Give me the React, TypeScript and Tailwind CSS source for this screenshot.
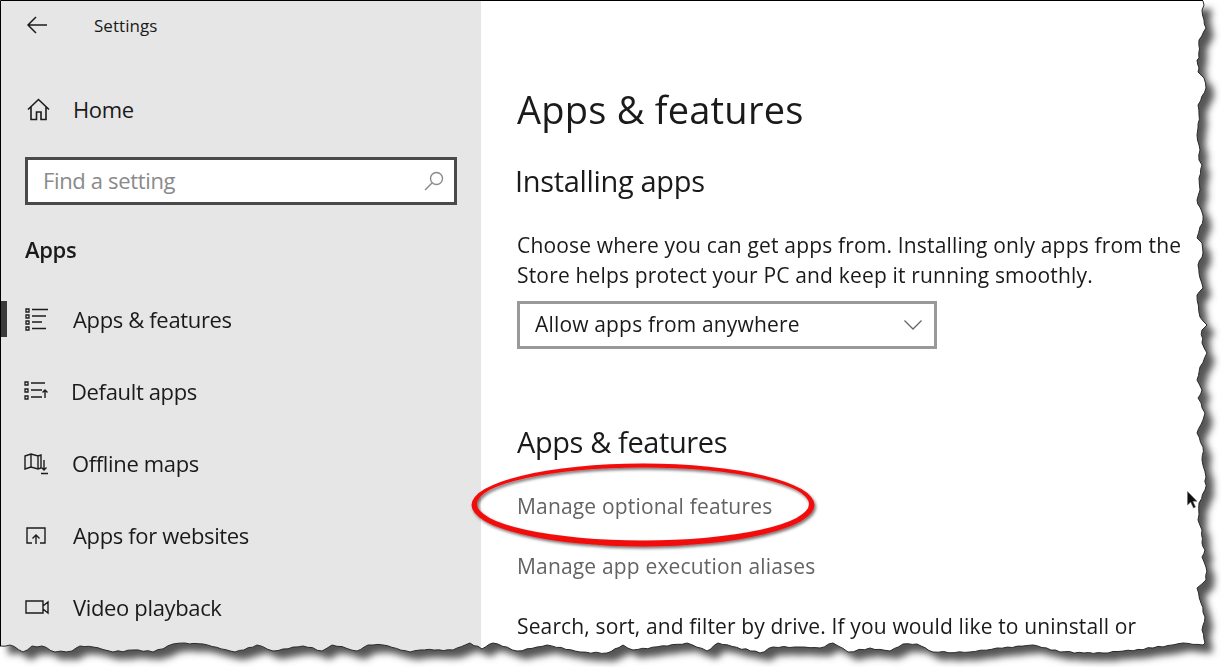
const font = "font-['Open_Sans','Noto_Sans',sans-serif]";

const right: [number, number][] = [
  [1203, 1], [1204, 5], [1202, 10], [1204, 20], [1206, 28], [1199, 40], [1199, 58], [1197, 60], [1199, 68], [1198, 72], [1204, 78], [1206, 88],
  [1198, 105], [1199, 115], [1198, 128], [1197, 135], [1200, 150], [1199, 160], [1202, 165], [1199, 178], [1200, 190], [1197, 200], [1202, 212], [1203, 220],
  [1200, 227], [1197, 238], [1202, 243], [1203, 253], [1198, 265], [1200, 278], [1203, 288], [1197, 295], [1200, 317], [1207, 325], [1202, 330],
  [1202, 343], [1207, 353], [1200, 367], [1197, 380], [1202, 390], [1198, 398], [1205, 413], [1203, 420], [1197, 433], [1203, 447], [1202, 460],
  [1206, 477], [1205, 490], [1199, 503], [1198, 520], [1202, 530], [1202, 543], [1205, 550], [1202, 557], [1206, 567], [1206, 580], [1197, 588],
  [1201, 603], [1205, 617], [1202, 630], [1205, 643], [1203, 645],
];
const bottom: [number, number][] = [
  [1183, 643], [1153, 648], [1103, 653], [1060, 652], [1033, 645], [997, 648], [970, 652], [933, 652], [917, 644], [903, 644], [890, 651], [870, 648], [848, 652], [833, 643], [820, 648],
  [800, 647], [773, 647], [760, 653], [718, 643], [707, 651], [687, 643], [633, 650], [623, 645], [607, 653], [580, 652], [547, 645], [517, 651], [493, 643], [482, 649], [470, 643], [453, 650], [420, 650],
  [410, 652], [383, 645], [368, 645], [357, 651], [332, 645], [322, 651], [303, 646], [273, 651], [257, 645], [235, 652], [203, 644], [185, 643], [173, 644], [153, 652], [133, 650], [113, 652], [93, 647], [80, 646], [72, 651], [55, 652], [42, 646], [32, 646], [23, 652], [10, 645], [0, 646],
];

function jag(pts: [number, number][]) {
  const out: string[] = [];
  pts.forEach((p, i) => {
    out.push(`${p[0]},${p[1]}`);
    const n = pts[i + 1];
    if (!n) return;
    const steps = Math.max(1, Math.round(Math.hypot(n[0] - p[0], n[1] - p[1]) / 5));
    for (let s = 1; s < steps; s++) {
      const t = s / steps;
      const j = ((Math.sin((i + 1) * 12.9898 + s * 78.233) * 43758.5453) % 1) * 0.9;
      const horizontal = Math.abs(n[0] - p[0]) > Math.abs(n[1] - p[1]);
      const x = p[0] + (n[0] - p[0]) * t + (horizontal ? 0 : j);
      const y = p[1] + (n[1] - p[1]) * t + (horizontal ? j : 0);
      out.push(`${x.toFixed(1)},${y.toFixed(1)}`);
    }
  });
  return out.join(" ");
}

const edge = jag([...right, ...bottom]);
const pagePoly = `M0,1 L${edge} Z`;
const outside = `M0,0 H1221 V667 H0 Z ${pagePoly}`;

function TornEdge() {
  return (
    <svg className="absolute left-0 top-0" width="1221" height="667" viewBox="0 0 1221 667">
      <defs>
        <filter id="tornBlur" x="-5%" y="-5%" width="110%" height="110%">
          <feGaussianBlur stdDeviation="3.500" />
        </filter>
        <clipPath id="outsideClip">
          <path d={outside} clipRule="evenodd" />
        </clipPath>
      </defs>
      <path d={outside} fill="#ffffff" fillRule="evenodd" />
      <g clipPath="url(#outsideClip)">
        <path d={pagePoly} fill="#555555" transform="translate(8 8)" filter="url(#tornBlur)" />
      </g>
      <polyline points={edge} fill="none" stroke="#2a2a2a" strokeWidth="1" />
      <path d="M0.5,646 V0.5 H1203" fill="none" stroke="#000000" strokeWidth="1" />
    </svg>
  );
}

function Icon({ children, w = 24, h = 24 }: { children: React.ReactNode; w?: number; h?: number }) {
  return (
    <svg width={w} height={h} viewBox={`0 0 ${w} ${h}`} fill="none" stroke="#1c1c1c" strokeWidth="1.4">
      {children}
    </svg>
  );
}

const items: { label: string; x: string; gap: string; active?: boolean; icon: React.ReactNode }[] = [
  {
    label: "Apps & features",
    x: "ml-[25px]",
    gap: "ml-[24px]",
    active: true,
    icon: (
      <Icon>
        <path d="M1,2h3v3h-3zM1,8h3v3h-3zM1,14h3v3h-3zM1,20h3v3h-3z" strokeWidth="1.3" />
        <path d="M7,2.500h16M7,9h14M7,15h10M7,21.500h14" />
      </Icon>
    ),
  },
  {
    label: "Default apps",
    x: "ml-[24px]",
    gap: "ml-[23px]",
    icon: (
      <Icon>
        <path d="M1,3h3v3h-3zM1,10h3v3h-3zM1,17h3v3h-3z" strokeWidth="1.3" />
        <path d="M7,4h14M7,11h11M7,18h11M21,19v-8M18.500,13.500l2.500,-2.500l2.500,2.500" />
      </Icon>
    ),
  },
  {
    label: "Offline maps",
    x: "ml-[24px]",
    gap: "ml-[24px]",
    icon: (
      <Icon>
        <path d="M1,5l6,-2l7,2l3,-1v13l-3,1l-7,-2l-6,2zM7,3v13M14,5v13" />
        <path d="M20,9v10M17.500,16.500l2.500,2.500l2.500,-2.500M17,22.500h7" />
      </Icon>
    ),
  },
  {
    label: "Apps for websites",
    x: "ml-[25px]",
    gap: "ml-[24px]",
    icon: (
      <Icon>
        <path d="M7,20h-5v-15h18v15h-5" />
        <path d="M11,21v-9M7.500,15.500l3.500,-3.500l3.500,3.500" />
      </Icon>
    ),
  },
  {
    label: "Video playback",
    x: "ml-[25px]",
    gap: "ml-[24px]",
    icon: (
      <Icon>
        <path d="M1,6h17v12h-17zM18,11l5,-4v11l-5,-4" />
      </Icon>
    ),
  },
];

function Sidebar() {
  return (
    <aside className="w-[481px] h-full shrink-0 bg-[#e6e6e6] flex flex-col text-[#1a1a1a]">
      <header className="h-[52px] flex items-center pl-[26px]">
        <svg width="22" height="20" viewBox="0 0 22 20" fill="none" stroke="#1c1c1c" strokeWidth="1.5" className="-mt-[3px]">
          <path d="M21,10H2M10,2L2,10l8,8" />
        </svg>
        <span className="ml-[46px] text-[17px] tracking-[0.05px]">Settings</span>
      </header>
      <div className="mt-[31px] h-[52px] flex items-center pl-[27px] text-[22px] tracking-[-0.35px]">
        <svg width="23" height="23" viewBox="0 0 23 23" fill="none" stroke="#1c1c1c" strokeWidth="1.6" className="mt-[1px]">
          <path d="M1,11.500L11.500,1.500L22,11.500M4,9V21.500H9.500V14H14V21.500H19V9" />
        </svg>
        <span className="ml-[23px]">Home</span>
      </div>
      <div className="mt-[22px] ml-[25px] w-[432px] h-[48px] border-[3px] border-[#4a4a4a] bg-white flex items-center justify-between pl-[15px] pr-[10px]">
        <span className="text-[22px] tracking-[-0.35px] text-[#8a8a8a] -mt-[2px]">Find a setting</span>
        <svg width="20" height="20" viewBox="0 0 20 20" fill="none" stroke="#8a8a8a" strokeWidth="1.4">
          <circle cx="12.500" cy="7.500" r="6" />
          <path d="M8,12L1,19" />
        </svg>
      </div>
      <div className="mt-[24px] h-[40px] pl-[25px] flex items-center text-[22px] tracking-[-0.35px] font-semibold">Apps</div>
      <nav className="mt-[14px] flex flex-col">
        {items.map((it) => (
          <div key={it.label} className="h-[72px] shrink-0 flex items-center relative text-[22px] tracking-[-0.35px]">
            {it.active && <span className="absolute left-0 top-[18px] w-[7px] h-[36px] bg-[#3a3a3a]" />}
            <span className={it.x}>{it.icon}</span>
            <span className={it.gap}>{it.label}</span>
          </div>
        ))}
      </nav>
    </aside>
  );
}

function Main() {
  return (
    <main className="flex-1 h-full overflow-hidden pl-[36px] text-[#1a1a1a]">
      <h1 className="mt-[83px] h-[52px] flex items-center text-[38px] tracking-[0.23px] whitespace-nowrap">Apps &amp; features</h1>
      <h2 className="mt-[26px] -ml-[2px] h-[40px] flex items-center text-[29px] tracking-[-0.33px] whitespace-nowrap">Installing apps</h2>
      <p className="mt-[29px] text-[21px] leading-[30px] tracking-[0.17px] whitespace-nowrap">
        Choose where you can get apps from. Installing only apps from the
        <br />
        Store helps protect your PC and keep it running smoothly.
      </p>
      <div className="mt-[11px] w-[420px] h-[48px] border-[3px] border-[#999999] flex items-center justify-between pl-[15px] pr-[12px]">
        <span className="text-[21px] tracking-[0.17px]">Allow apps from anywhere</span>
        <svg width="18" height="10" viewBox="0 0 18 10" fill="none" stroke="#666666" strokeWidth="1.3">
          <path d="M0.500,0.500L9,9L17.500,0.500" />
        </svg>
      </div>
      <h2 className="mt-[73px] h-[40px] flex items-center text-[29px] tracking-[-0.4px] whitespace-nowrap">Apps &amp; features</h2>
      <a className="mt-[29px] block h-[30px] leading-[30px] text-[21px] tracking-[0.17px] text-[#636363] whitespace-nowrap">Manage optional features</a>
      <a className="mt-[30px] block h-[30px] leading-[30px] text-[21px] tracking-[0.17px] text-[#636363] whitespace-nowrap">Manage app execution aliases</a>
      <p className="mt-[30px] h-[30px] leading-[30px] text-[21px] tracking-[0.14px] whitespace-nowrap">
        Search, sort, and filter by drive. If you would like to uninstall or
      </p>
    </main>
  );
}

function Annotations() {
  return (
    <svg className="absolute left-0 top-0" width="1221" height="667" viewBox="0 0 1221 667">
      <defs>
        <filter id="ovalShadow" x="-10%" y="-30%" width="120%" height="160%">
          <feDropShadow dx="1.500" dy="2" stdDeviation="1.500" floodColor="#000000" floodOpacity="0.55" />
        </filter>
      </defs>
      <path
        d="M471.500,505a171.500,41.500 0 1,0 343,0a171.500,41.500 0 1,0 -343,0ZM477,504a166,36.500 0 1,0 332,0a166,36.500 0 1,0 -332,0Z"
        fill="#f20d0d"
        fillRule="evenodd"
        filter="url(#ovalShadow)"
      />
      <path d="M1187.500,491.500V505l3.200,-3l2.800,6l2,-1l-2.700,-5.700h4.200z" fill="#111111" stroke="#666666" strokeWidth="0.500" />
    </svg>
  );
}

export default function App() {
  return (
    <div className={`relative w-[1221px] h-[667px] overflow-hidden bg-white flex ${font}`}>
      <div className="flex w-full h-full blur-[0.3px]">
        <Sidebar />
        <Main />
      </div>
      <Annotations />
      <TornEdge />
    </div>
  );
}
